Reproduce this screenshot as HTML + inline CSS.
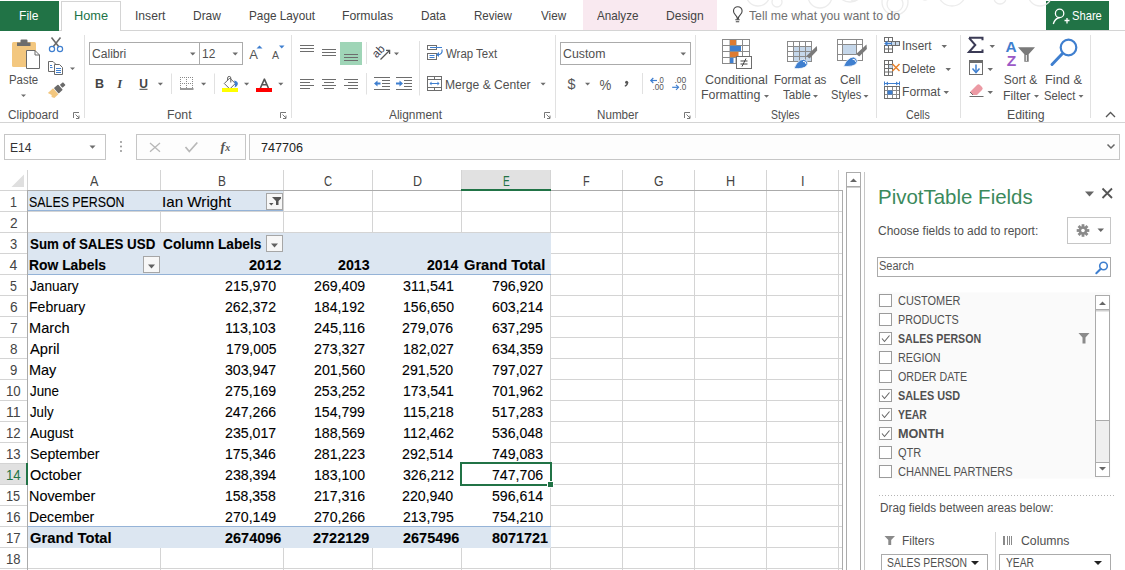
<!DOCTYPE html>
<html><head><meta charset="utf-8"><title>Excel</title>
<style>
html,body{margin:0;padding:0;}
body{width:1125px;height:570px;overflow:hidden;position:relative;background:#fff;font-family:"Liberation Sans",sans-serif;}
.t{position:absolute;white-space:nowrap;transform-origin:0 0;}
.r{position:absolute;box-sizing:border-box;}
.hl{position:absolute;height:1px;}
.vl{position:absolute;width:1px;}
svg{position:absolute;overflow:visible;}

</style></head><body>
<!-- tab row -->
<div class="r" style="left:0;top:30px;width:1125px;height:1px;background:#d4d4d4"></div>
<div class="r" style="left:583px;top:0;width:134px;height:30px;background:#f9e9f0"></div>
<div class="r" style="left:0;top:1px;width:59px;height:30px;background:#217346"></div>
<div class="r" style="left:61px;top:1px;width:60px;height:30px;background:#fff;border:1px solid #d4d4d4;border-bottom:none"></div>
<div class="r" style="left:1046px;top:1px;width:63px;height:29px;background:#217346"></div>
<!-- ribbon bottom -->
<div class="r" style="left:0;top:122px;width:1125px;height:1px;background:#d4d4d4"></div>
<!-- group separators -->
<div class="vl" style="left:84px;top:35px;height:83px;background:#e1e1e1"></div>
<div class="vl" style="left:291px;top:35px;height:83px;background:#e1e1e1"></div>
<div class="vl" style="left:555px;top:35px;height:83px;background:#e1e1e1"></div>
<div class="vl" style="left:695px;top:35px;height:83px;background:#e1e1e1"></div>
<div class="vl" style="left:876px;top:35px;height:83px;background:#e1e1e1"></div>
<div class="vl" style="left:960px;top:35px;height:83px;background:#e1e1e1"></div>
<div class="vl" style="left:1090px;top:35px;height:83px;background:#e1e1e1"></div>
<!-- formula bar -->
<div class="r" style="left:4px;top:134px;width:102px;height:26px;border:1px solid #c6c6c6;background:#fff"></div>
<div class="r" style="left:136px;top:134px;width:110px;height:26px;border:1px solid #c6c6c6;background:#fdfdfd"></div>
<div class="r" style="left:249px;top:134px;width:871px;height:26px;border:1px solid #c6c6c6;background:#fdfdfd"></div>

<div class="vl" style="left:160px;top:170px;height:20px;background:#d4d4d4"></div>
<div class="vl" style="left:283px;top:170px;height:20px;background:#d4d4d4"></div>
<div class="vl" style="left:372px;top:170px;height:20px;background:#d4d4d4"></div>
<div class="vl" style="left:461px;top:170px;height:20px;background:#d4d4d4"></div>
<div class="vl" style="left:550px;top:170px;height:20px;background:#d4d4d4"></div>
<div class="vl" style="left:622px;top:170px;height:20px;background:#d4d4d4"></div>
<div class="vl" style="left:694px;top:170px;height:20px;background:#d4d4d4"></div>
<div class="vl" style="left:766px;top:170px;height:20px;background:#d4d4d4"></div>
<div class="vl" style="left:838px;top:170px;height:20px;background:#d4d4d4"></div>
<div class="r" style="left:462px;top:170px;width:88px;height:20px;background:#e1e1e1"></div>
<div class="hl" style="left:0;top:190px;width:27px;background:#d4d4d4"></div>
<div class="hl" style="left:27px;top:190px;width:816px;background:#ababab"></div>
<div class="vl" style="left:160px;top:191px;height:379px;background:#d4d4d4"></div>
<div class="vl" style="left:283px;top:191px;height:379px;background:#d4d4d4"></div>
<div class="vl" style="left:372px;top:191px;height:379px;background:#d4d4d4"></div>
<div class="vl" style="left:461px;top:191px;height:379px;background:#d4d4d4"></div>
<div class="vl" style="left:550px;top:191px;height:379px;background:#d4d4d4"></div>
<div class="vl" style="left:622px;top:191px;height:379px;background:#d4d4d4"></div>
<div class="vl" style="left:694px;top:191px;height:379px;background:#d4d4d4"></div>
<div class="vl" style="left:766px;top:191px;height:379px;background:#d4d4d4"></div>
<div class="vl" style="left:838px;top:191px;height:379px;background:#d4d4d4"></div>
<div class="hl" style="left:0;top:211px;width:842px;background:#d4d4d4"></div>
<div class="hl" style="left:0;top:232px;width:842px;background:#d4d4d4"></div>
<div class="hl" style="left:0;top:253px;width:842px;background:#d4d4d4"></div>
<div class="hl" style="left:0;top:274px;width:842px;background:#d4d4d4"></div>
<div class="hl" style="left:0;top:295px;width:842px;background:#d4d4d4"></div>
<div class="hl" style="left:0;top:316px;width:842px;background:#d4d4d4"></div>
<div class="hl" style="left:0;top:337px;width:842px;background:#d4d4d4"></div>
<div class="hl" style="left:0;top:358px;width:842px;background:#d4d4d4"></div>
<div class="hl" style="left:0;top:379px;width:842px;background:#d4d4d4"></div>
<div class="hl" style="left:0;top:400px;width:842px;background:#d4d4d4"></div>
<div class="hl" style="left:0;top:421px;width:842px;background:#d4d4d4"></div>
<div class="hl" style="left:0;top:442px;width:842px;background:#d4d4d4"></div>
<div class="hl" style="left:0;top:463px;width:842px;background:#d4d4d4"></div>
<div class="hl" style="left:0;top:484px;width:842px;background:#d4d4d4"></div>
<div class="hl" style="left:0;top:505px;width:842px;background:#d4d4d4"></div>
<div class="hl" style="left:0;top:526px;width:842px;background:#d4d4d4"></div>
<div class="hl" style="left:0;top:547px;width:842px;background:#d4d4d4"></div>
<div class="hl" style="left:0;top:568px;width:842px;background:#d4d4d4"></div>
<div class="vl" style="left:27px;top:170px;height:20px;background:#d4d4d4"></div>
<div class="vl" style="left:27px;top:190px;height:380px;background:#ababab"></div>
<div class="vl" style="left:842px;top:190px;height:380px;background:#ababab"></div>
<svg style="left:0;top:170px" width="27" height="20"><path d="M11.5 17 L24 17 L24 4.5 Z" fill="#dfdfdf"/></svg>
<div class="r" style="left:28px;top:275px;width:522px;height:252px;background:#fff"></div>
<div class="r" style="left:28px;top:191px;width:255px;height:20px;background:#dce6f1;border-bottom:1px solid #95b3d7"></div>
<div class="r" style="left:28px;top:233px;width:523px;height:42px;background:#dce6f1;border-bottom:1px solid #95b3d7"></div>
<div class="r" style="left:28px;top:526px;width:523px;height:22px;background:#dce6f1;border-top:1px solid #95b3d7"></div>
<div class="r" style="left:0;top:464px;width:26px;height:20px;background:#e1e1e1"></div>
<div class="r" style="left:26px;top:463px;width:2px;height:22px;background:#217346"></div>
<div class="r" style="left:460px;top:462px;width:92px;height:24px;border:2px solid #217346"></div>
<div class="r" style="left:461px;top:189px;width:90px;height:2px;background:#217346"></div>
<div class="r" style="left:547px;top:481px;width:7px;height:7px;background:#217346;border:1px solid #fff"></div>
<div class="r" style="left:266px;top:193px;width:17px;height:17px;border:1px solid #a6a6a6;background:#f7f7f7"></div>
<svg style="left:266px;top:193px" width="17" height="17"><path d="M6 4 L15 4 L15 5.5 L12.5 8 L12.5 12 L10 12 L10 8 L7.5 5.5 Z" fill="#555"/><path d="M3 10 L7.5 10 L5.25 12.5 Z" fill="#555"/></svg>
<div class="r" style="left:266px;top:235px;width:17px;height:17px;border:1px solid #a6a6a6;background:#f7f7f7"></div>
<svg style="left:266px;top:235px" width="17" height="17"><path d="M5 8.5 L12 8.5 L8.5 12.5 Z" fill="#616161"/></svg>
<div class="r" style="left:143px;top:256px;width:17px;height:17px;border:1px solid #a6a6a6;background:#f7f7f7"></div>
<svg style="left:143px;top:256px" width="17" height="17"><path d="M5 8.5 L12 8.5 L8.5 12.5 Z" fill="#616161"/></svg>
<svg style="left:0;top:0" width="1125" height="570" viewBox="0 0 1125 570"><!-- clipboard group -->
<rect x="12" y="42" width="24" height="25" rx="1.5" fill="#f3c77f"/>
<path d="M21.5 39.5 h5 a1 1 0 0 1 1 1 v2 h3 v3.5 h-13.5 v-3.5 h3.5 v-2 a1 1 0 0 1 1 -1z" fill="#6d6d6d"/>
<path d="M26.5 50.5 h8.5 l4.5 4.5 v13.5 h-13z" fill="#fff" stroke="#6a6a6a" stroke-width="1"/>
<path d="M35 50.5 v4.5 h4.5" fill="none" stroke="#6a6a6a" stroke-width="1"/>
<path d="M21 94.5 h5 l-2.5 2.5z" fill="#6d6d6d"/>
<!-- scissors -->
<path d="M51.5 37.5 L59 47 M60.5 37.5 L53 47" stroke="#6a6a6a" stroke-width="1.6" fill="none"/>
<circle cx="52" cy="49" r="2.6" fill="none" stroke="#3f7fcf" stroke-width="1.2"/>
<circle cx="60" cy="49" r="2.6" fill="none" stroke="#3f7fcf" stroke-width="1.2"/>
<!-- copy -->
<path d="M48.5 61.5 h4.5 l2.5 2.5 v7.5 h-7z" fill="#fff" stroke="#6a6a6a" stroke-width="1"/>
<path d="M54.5 64.5 h5 l3 3 v7 h-8z" fill="#fff" stroke="#6a6a6a" stroke-width="1"/>
<path d="M50 65.5 h2 M50 67.5 h2.5 M56 68.5 h5 M56 70.5 h5 M56 72.5 h5" stroke="#3f7fcf" stroke-width="1"/>
<path d="M70 67.5 h5 l-2.5 2.5z" fill="#6d6d6d"/>
<!-- brush -->
<g transform="translate(57.6 89.6) rotate(-42)">
<path d="M-9.5 -4 L-2.5 -4 L-2.5 4 L-8 4 L-9.5 1.5 L-8 0 z" fill="#f3c77f"/>
<rect x="-1.8" y="-3.6" width="5.6" height="7.2" rx="0.8" fill="#6a6a6a"/>
<rect x="4.8" y="-2" width="4.2" height="4" rx="0.8" fill="#6a6a6a"/>
</g>
<!-- launchers -->
<g fill="none" stroke="#777" stroke-width="1">
<path d="M73.5 118 v-5.5 h5.5 M75.5 114.5 l3.5 3.5 M79 115.5 v3 h-3"/>
</g>
</svg>
<svg style="left:0;top:0" width="1125" height="570" viewBox="0 0 1125 570"><!-- font group -->
<rect x="89.5" y="42.5" width="153" height="22" fill="#fff" stroke="#ababab" stroke-width="1"/>
<path d="M199.5 42.5 v22" stroke="#ababab" stroke-width="1"/>
<path d="M190 52.5 h5.5 l-2.75 3z M232.5 52.5 h5.5 l-2.75 3z" fill="#6d6d6d"/>
<text x="249.3" y="58.6" font-family="Liberation Sans" font-size="13" fill="#555">A</text>
<path d="M256.5 48.5 l3 -3 l3 3z" fill="#3f7fcf"/>
<text x="272" y="58.6" font-family="Liberation Sans" font-size="10.5" fill="#555">A</text>
<path d="M279 45.5 h5.5 l-2.75 3z" fill="#3f7fcf"/>
<text x="95" y="87.6" font-family="Liberation Sans" font-size="12.5" font-weight="700" fill="#444">B</text>
<text x="117.2" y="87.6" font-family="Liberation Serif" font-size="12.5" font-style="italic" font-weight="700" fill="#444">I</text>
<text x="139.2" y="87.6" font-family="Liberation Sans" font-size="12" font-weight="700" fill="#444">U</text>
<path d="M139.5 89.3 h8" stroke="#444" stroke-width="1"/>
<path d="M157.8 82.8 h5.2 l-2.6 2.8z M201 82.8 h5.2 l-2.6 2.8z M244 82.8 h5.2 l-2.6 2.8z M278.2 82.8 h5.2 l-2.6 2.8z" fill="#6d6d6d"/>
<path d="M171.5 73.5 v20.5 M214.5 73.5 v20.5" stroke="#e1e1e1" stroke-width="1"/>
<!-- borders -->
<g fill="#8a8a8a">
<path d="M180 77 h13.5 v1 h-13.5z" opacity="0"/>
</g>
<path d="M180.5 77 v12 M186.5 77 v12 M192.5 77 v12 M180 77.5 h13 M180 83.5 h13" stroke="#8a8a8a" stroke-width="1" stroke-dasharray="1 1" fill="none"/>
<path d="M180 89 h13.5" stroke="#555" stroke-width="1.2"/>
<!-- fill bucket -->
<path d="M224.3 83.5 L229.8 78 L235.3 83.5 L229.8 89 Z" fill="#fff" stroke="#666" stroke-width="1"/>
<path d="M227.6 80.5 v-2.5 a1.6 1.6 0 0 1 3.2 0 v4.5" fill="none" stroke="#666" stroke-width="1"/>
<path d="M234.2 80.6 q3.8 0.6 3.7 3.4 q-0.3 2.2 -3.2 3.4 q0.6 -2.2 -0.5 -6.8z" fill="#3f7fcf"/>
<rect x="222" y="88" width="16" height="4" fill="#ffff00"/>
<!-- font color -->
<path d="M260.4 88 L264.4 79.2 L268.4 88 M261.9 84.8 h5" fill="none" stroke="#555" stroke-width="1.6" stroke-linejoin="round"/>
<rect x="256" y="88" width="16" height="4" fill="#ff0000"/>
<!-- launcher -->
<path d="M280.5 118 v-5.5 h5.5 M282.5 114.5 l3.5 3.5 M286 115.5 v3 h-3" fill="none" stroke="#777" stroke-width="1"/>
</svg>
<svg style="left:0;top:0" width="1125" height="570" viewBox="0 0 1125 570"><!-- alignment group -->
<g stroke="#6d6d6d" stroke-width="1.1" fill="none">
<path d="M300 45.5 h14 M300 48.5 h14 M300 51.5 h14"/>
<path d="M322 49.5 h14 M322 52.5 h14 M322 55.5 h14"/>
</g>
<rect x="340" y="42" width="22" height="23" fill="#9fd5b7"/>
<g stroke="#6d6d6d" stroke-width="1.1" fill="none">
<path d="M344 54.5 h14 M344 57.5 h14 M344 60.5 h14"/>
<path d="M300 79.5 h14 M300 82.5 h10 M300 85.5 h14 M300 88.5 h10"/>
<path d="M322 79.5 h14 M324 82.5 h10 M322 85.5 h14 M324 88.5 h10"/>
<path d="M344 79.5 h14 M348 82.5 h10 M344 85.5 h14 M348 88.5 h10"/>
<path d="M374 77.5 h16 M382 80.5 h8 M382 83.5 h8 M382 86.5 h8 M374 89.5 h16"/>
<path d="M396 77.5 h16 M404 80.5 h8 M404 83.5 h8 M404 86.5 h8 M396 89.5 h16"/>
</g>
<path d="M374 83.5 l3.5 -3 v2 h3 v2 h-3 v2z" fill="#3f7fcf"/>
<path d="M403 83.5 l-3.5 -3 v2 h-3.5 v2 h3.5 v2z" fill="#3f7fcf"/>
<path d="M366.5 42 v22 M366.5 73 v21.5 M419.5 41 v54.5" stroke="#e1e1e1" stroke-width="1"/>
<!-- orientation -->
<text x="0" y="0" font-family="Liberation Sans" font-size="11.5" fill="#3b3b4b" transform="translate(376.6 58.4) rotate(-45)">ab</text>
<path d="M380.5 59.5 l8.5 -8.5" stroke="#555" stroke-width="1.2"/>
<path d="M386 50.3 h3.6 v3.6" stroke="#555" stroke-width="1.3" fill="none"/>
<path d="M394 52.5 h5 l-2.5 2.7z" fill="#6d6d6d"/>
<!-- wrap text -->
<rect x="427.5" y="45.5" width="9" height="4" fill="#fff" stroke="#6d6d6d" stroke-width="1"/>
<rect x="427.5" y="53.5" width="9" height="6" fill="#fff" stroke="#6d6d6d" stroke-width="1"/>
<path d="M430 47.5 h12 M429.5 55.5 h5 M429.5 57.5 h5" stroke="#3f7fcf" stroke-width="1"/>
<path d="M442 49.5 q1 5 -5 5.5" stroke="#3f7fcf" stroke-width="1.2" fill="none"/>
<path d="M436 54.5 l3 -2.5 v5z" fill="#3f7fcf"/>
<!-- merge -->
<rect x="427.5" y="76.5" width="14" height="14" fill="#fff" stroke="#6d6d6d" stroke-width="1"/>
<path d="M427.5 79.5 h14 M427.5 87.5 h14 M434.5 76.5 v3 M434.5 87.5 v3" stroke="#6d6d6d" stroke-width="1"/>
<path d="M430 83.5 h9" stroke="#3f7fcf" stroke-width="1"/>
<path d="M429.5 83.5 l2 -2 v4z M439.5 83.5 l-2 -2 v4z" fill="#3f7fcf"/>
<path d="M540.5 82.8 h5.2 l-2.6 2.8z" fill="#6d6d6d"/>
<path d="M544.5 118 v-5.5 h5.5 M546.5 114.5 l3.5 3.5 M550 115.5 v3 h-3" fill="none" stroke="#777" stroke-width="1"/>
</svg>
<svg style="left:0;top:0" width="1125" height="570" viewBox="0 0 1125 570"><!-- number group -->
<rect x="560.5" y="42.5" width="130" height="22" fill="#fff" stroke="#ababab" stroke-width="1"/>
<path d="M680.5 52.5 h5.5 l-2.75 3z" fill="#6d6d6d"/>
<text x="567.6" y="88.6" font-family="Liberation Sans" font-size="15" fill="#555" textLength="8" lengthAdjust="spacingAndGlyphs">$</text>
<path d="M585 82.8 h5.2 l-2.6 2.8z" fill="#6d6d6d"/>
<text x="599.4" y="89.8" font-family="Liberation Sans" font-size="14" fill="#555" textLength="11.8" lengthAdjust="spacingAndGlyphs">%</text>
<circle cx="626.6" cy="82.2" r="1.5" fill="#555"/>
<path d="M627.6 82 q0.4 2.6 -2.8 4.3" stroke="#555" stroke-width="1.2" fill="none"/>
<path d="M642.5 73 v21" stroke="#e1e1e1" stroke-width="1"/>
<text x="657.4" y="82.8" font-family="Liberation Sans" font-size="8.5" fill="#555" textLength="6.5" lengthAdjust="spacingAndGlyphs">.0</text>
<text x="652.6" y="89.8" font-family="Liberation Sans" font-size="8.5" fill="#555" textLength="11.3" lengthAdjust="spacingAndGlyphs">.00</text>
<path d="M650.8 80.5 h6.2" stroke="#3f7fcf" stroke-width="1.2"/>
<path d="M653.3 78 l-2.5 2.5 l2.5 2.5" stroke="#3f7fcf" stroke-width="1.2" fill="none"/>
<text x="674.4" y="82.8" font-family="Liberation Sans" font-size="8.5" fill="#555" textLength="11.8" lengthAdjust="spacingAndGlyphs">.00</text>
<text x="679.4" y="89.8" font-family="Liberation Sans" font-size="8.5" fill="#555" textLength="6.8" lengthAdjust="spacingAndGlyphs">.0</text>
<path d="M672.2 87.3 h6.2" stroke="#3f7fcf" stroke-width="1.2"/>
<path d="M676 84.8 l2.5 2.5 l-2.5 2.5" stroke="#3f7fcf" stroke-width="1.2" fill="none"/>
<path d="M684.5 118 v-5.5 h5.5 M686.5 114.5 l3.5 3.5 M690 115.5 v3 h-3" fill="none" stroke="#777" stroke-width="1"/>
</svg>
<svg style="left:0;top:0" width="1125" height="570" viewBox="0 0 1125 570"><!-- styles group -->
<!-- conditional formatting -->
<g stroke="#8a8a8a" stroke-width="1" fill="none">
<rect x="722.5" y="39.5" width="27" height="24"/>
<path d="M730 39.5 v24 M736 39.5 v24 M742.5 39.5 v24 M722.5 45.5 h27 M722.5 51.5 h27 M722.5 57.5 h27"/>
</g>
<rect x="730" y="40" width="6" height="5" fill="#dd7b32"/>
<rect x="730" y="46" width="11" height="5" fill="#3f7fcf"/>
<rect x="730" y="52" width="8.5" height="5" fill="#dd7b32"/>
<rect x="730" y="58" width="3.5" height="5" fill="#3f7fcf"/>
<rect x="736.5" y="56.5" width="15" height="12" fill="#fff" stroke="#6d6d6d" stroke-width="1"/>
<path d="M740.5 61 h7 M740.5 64 h7 M746 58.5 l-4 8" stroke="#444" stroke-width="1" fill="none"/>
<!-- format as table -->
<rect x="793.5" y="46.5" width="18" height="15" fill="#c5d7ea"/>
<g stroke="#8a8a8a" stroke-width="1" fill="none">
<rect x="787.5" y="41.5" width="24" height="20"/>
<path d="M793.5 41.5 v20 M799.5 41.5 v20 M805.5 41.5 v20 M787.5 46.5 h24 M787.5 51.5 h24 M787.5 56.5 h24"/>
</g>
<path d="M816.8 46 L817.2 50.5 L809.5 58.5 L806.5 56z" fill="#7a7a7a"/>
<path d="M794 68.6 q2 -6 6.5 -8.5 q3.5 -2 6 0.5 q2.5 2.5 0 5.5 q-3 3 -12.5 2.5z" fill="#3f7fcf" stroke="#fff" stroke-width="0.8"/><path d="M803 61.5 q3 -0.5 3 2.5" stroke="#fff" stroke-width="1" fill="none"/>
<!-- cell styles -->
<rect x="842.5" y="44.5" width="14" height="10" fill="#c5d7ea"/>
<g stroke="#8a8a8a" stroke-width="1" fill="none">
<rect x="837.5" y="39.5" width="25" height="21"/>
<path d="M842.5 39.5 v21 M856.5 39.5 v15 M837.5 44.5 h25 M837.5 54.5 h19"/>
</g>
<path d="M866.5 44.5 L866.9 49 L859.2 56.5 L856.2 54z" fill="#7a7a7a"/>
<path d="M843.6 66.4 q2 -6 6.5 -8.5 q3.5 -2 6 0.5 q2.5 2.5 0 5.5 q-3 3 -12.5 2.5z" fill="#3f7fcf" stroke="#fff" stroke-width="0.8"/><path d="M852.6 59.3 q3 -0.5 3 2.5" stroke="#fff" stroke-width="1" fill="none"/>
<path d="M764 95 h5 l-2.5 2.7z M813 95 h5 l-2.5 2.7z M863.5 95 h5 l-2.5 2.7z" fill="#6d6d6d"/>
</svg>
<svg style="left:0;top:0" width="1125" height="570" viewBox="0 0 1125 570"><!-- cells group -->
<g stroke="#6d6d6d" stroke-width="1" fill="#fff">
<rect x="884.5" y="37.5" width="8" height="4"/>
<path d="M888.5 37.5 v4"/>
<rect x="884.5" y="45.5" width="8" height="7"/>
<path d="M888.5 45.5 v7 M884.5 49 h8"/>
<rect x="891.5" y="41.5" width="8" height="4" fill="#c5d7ea"/>
<path d="M895.5 41.5 v4"/>
</g>
<path d="M886.5 43.5 h5.5" stroke="#3f7fcf" stroke-width="1.6"/>
<path d="M884.2 43.5 l3.3 -3 v6z" fill="#3f7fcf"/>
<g stroke="#6d6d6d" stroke-width="1" fill="#fff">
<rect x="884.5" y="60.5" width="8" height="15"/>
<path d="M888.5 60.5 v15 M884.5 64.5 h8 M884.5 68.5 h8 M884.5 72 h8"/>
</g>
<rect x="889" y="65" width="3.5" height="3" fill="#c5d7ea"/>
<path d="M892.5 64 l7 7 M899.5 64 l-7 7" stroke="#e8842f" stroke-width="1.5"/>
<path d="M884.5 83.5 h15" stroke="#3f7fcf" stroke-width="1"/>
<path d="M884.5 81.5 v4 M899.5 81.5 v4" stroke="#3f7fcf" stroke-width="1"/>
<path d="M885.5 83.5 l2.5 -2 v4z M898.5 83.5 l-2.5 -2 v4z" fill="#3f7fcf"/>
<g stroke="#8a8a8a" stroke-width="1" fill="#fff">
<rect x="884.5" y="86.5" width="15" height="12"/>
<path d="M887.5 86.5 v12 M892.5 86.5 v12 M896.5 86.5 v12 M884.5 90.5 h15 M884.5 94.5 h15"/>
</g>
<rect x="887.5" y="90.5" width="5" height="4" fill="#3f7fcf"/>
<path d="M884.5 86.5 h15 v12 h-15z" fill="none" stroke="#6d6d6d" stroke-width="1"/>
<path d="M941.5 45 h5.5 l-2.75 3z M945.5 68 h5.5 l-2.75 3z M943.5 91 h5.5 l-2.75 3z" fill="#6d6d6d"/>
<!-- editing group -->
<path d="M969 37.8 h13.5 v2.5 M969 37.8 l6.3 7.2 l-6.3 7 h13.5 v-2.5" stroke="#3b3b55" stroke-width="2" fill="none" stroke-linejoin="miter"/>
<path d="M989.5 45 h5.5 l-2.75 3z" fill="#6d6d6d"/>
<rect x="969.5" y="60.5" width="13" height="14" fill="#fff" stroke="#6d6d6d" stroke-width="1"/>
<rect x="969" y="60" width="14" height="3" fill="#6d6d6d"/>
<path d="M976 64.5 v7" stroke="#3f7fcf" stroke-width="1.5"/>
<path d="M972.5 68.5 l3.5 4 l3.5 -4" stroke="#3f7fcf" stroke-width="1.5" fill="none"/>
<path d="M987.5 68 h5.5 l-2.75 3z" fill="#6d6d6d"/>
<path d="M970 92 l7 -7 q1.5 -1.5 3 0 l2 2 q1.5 1.5 0 3 l-5 5 h-4.5z" fill="#ec9aa4"/>
<path d="M970 92 l3 3 M969.5 96.5 h14" stroke="#6d6d6d" stroke-width="1"/>
<path d="M987.5 91 h5.5 l-2.75 3z" fill="#6d6d6d"/>
<text x="1005.4" y="51.8" font-family="Liberation Sans" font-size="15.5" font-weight="700" fill="#3f7fcf">A</text>
<text x="1006.8" y="65.6" font-family="Liberation Sans" font-size="15.5" font-weight="700" fill="#9b59c6">Z</text>
<path d="M1018 47.2 h17 l-6.3 7 v7.6 h-4.4 v-7.6z" fill="#7a7a7a"/><path d="M1020.5 48.8 h12 l-5 5.2 v6.8 h-2 v-6.8z" fill="#fff" opacity="0"/><path d="M1026.3 55 v6" stroke="#fff" stroke-width="1"/>
<path d="M1020 48.5 h13 l-5 5.5 v5.5 h-2 v-5.5z" fill="#fff" opacity="0"/>
<circle cx="1068.5" cy="47.5" r="7.8" fill="none" stroke="#3f7fcf" stroke-width="2.2"/>
<path d="M1062.5 53.5 l-10.5 11" stroke="#3f7fcf" stroke-width="3" stroke-linecap="round"/>
<path d="M1034 95 h5 l-2.5 2.7z M1078.5 95 h5 l-2.5 2.7z" fill="#6d6d6d"/>
<path d="M1106 117 l4.5 -4.5 l4.5 4.5" stroke="#555" stroke-width="1.3" fill="none"/>
</svg>
<svg style="left:0;top:0" width="1125" height="570" viewBox="0 0 1125 570"><!-- tab row extras -->
<g fill="none" stroke="#ececec" stroke-width="1.3">
<circle cx="758" cy="-6" r="12"/>
<circle cx="777" cy="2" r="5"/>
<circle cx="820" cy="-4" r="12"/>
<circle cx="854" cy="-3" r="4"/>
<circle cx="895" cy="2" r="13"/>
<circle cx="895" cy="4" r="8"/>
<circle cx="850" cy="-12" r="14"/>
<circle cx="925" cy="-5" r="5"/>
<circle cx="952" cy="-8" r="14"/>
<circle cx="1000" cy="-2" r="6"/>
<circle cx="1040" cy="-6" r="12"/>
</g>
<!-- light bulb -->
<path d="M737.5 19.5 q0 -2.5 -2.3 -4.8 q-1.7 -1.8 -1.7 -3.7 a4.3 4.3 0 0 1 8.6 0 q0 1.9 -1.7 3.7 q-2.3 2.3 -2.3 4.8" fill="none" stroke="#444" stroke-width="1.1"/>
<path d="M735.3 19.8 h4.4 M735.8 21.8 h3.4" stroke="#444" stroke-width="1.1"/>
<!-- share person -->
<circle cx="1059.6" cy="13.4" r="4.2" fill="none" stroke="#fff" stroke-width="1.3"/>
<path d="M1053.3 24 q1.5 -5.5 6.3 -6.5" fill="none" stroke="#fff" stroke-width="1.3"/>
<path d="M1064.5 20.5 h5 M1067 18 v5.5" stroke="#fff" stroke-width="1.3"/>
<!-- formula bar -->
<path d="M89.5 145.5 h6 l-3 3.2z" fill="#6d6d6d"/>
<circle cx="121" cy="142" r="0.9" fill="#888"/>
<circle cx="121" cy="146.5" r="0.9" fill="#888"/>
<circle cx="121" cy="151" r="0.9" fill="#888"/>
<path d="M150 143 l10 8.8 M160 143 l-10 8.8" stroke="#b8b8b8" stroke-width="1.3"/>
<path d="M185.5 147 l3.8 4.5 l8 -9" stroke="#b8b8b8" stroke-width="1.7" fill="none"/>
<text x="220.5" y="150.8" font-family="Liberation Serif" font-size="13.5" font-style="italic" font-weight="700" fill="#555">f</text>
<text x="225.3" y="151" font-family="Liberation Serif" font-size="10" font-style="italic" font-weight="700" fill="#555">x</text>
<path d="M1107.5 144.5 l3.5 3.5 l3.5 -3.5" stroke="#666" stroke-width="1.5" fill="none"/>
<!-- sheet scrollbar -->
<rect x="846.5" y="172.5" width="14" height="400" fill="#fff" stroke="#ababab" stroke-width="1"/>
<path d="M846.5 186.5 h14" stroke="#ababab" stroke-width="1"/>
<rect x="847" y="187" width="13" height="1" fill="#cfcfcf"/>
<path d="M850 182 l3.5 -3.5 l3.5 3.5z" fill="#666"/>
<path d="M864.5 172 v398" stroke="#c6c6c6" stroke-width="1"/>
</svg>
<svg style="left:0;top:0" width="1125" height="570" viewBox="0 0 1125 570"><!-- pivot panel -->
<path d="M1085 191.5 h9 l-4.5 5z" fill="#666"/>
<path d="M1102.5 188.5 l9.5 9.5 M1112 188.5 l-9.5 9.5" stroke="#555" stroke-width="1.8"/>
<rect x="1067.5" y="217.5" width="43" height="26" fill="#fff" stroke="#c6c6c6" stroke-width="1"/>
<g transform="translate(1083 230.5)">
<circle r="4.2" fill="#8a8a8a"/>
<g fill="#8a8a8a">
<rect x="-1.4" y="-6.3" width="2.8" height="12.6"/>
<rect x="-1.4" y="-6.3" width="2.8" height="12.6" transform="rotate(45)"/>
<rect x="-1.4" y="-6.3" width="2.8" height="12.6" transform="rotate(90)"/>
<rect x="-1.4" y="-6.3" width="2.8" height="12.6" transform="rotate(135)"/>
</g>
<circle r="1.8" fill="#fff"/>
</g>
<path d="M1097.5 228.5 h6.5 l-3.25 3.5z" fill="#666"/>
<rect x="877.5" y="257.5" width="233" height="19" fill="#fff" stroke="#ababab" stroke-width="1"/>
<circle cx="1103.5" cy="266" r="3.8" fill="none" stroke="#3f7fcf" stroke-width="1.6"/>
<path d="M1100.8 268.8 l-4.5 4.5" stroke="#3f7fcf" stroke-width="2" stroke-linecap="round"/>
<!-- list bg -->
<rect x="877.5" y="292.5" width="233" height="186" fill="#fafafa"/>
<g fill="#fff" stroke="#9b9b9b" stroke-width="1">
<rect x="879.5" y="294.5" width="12" height="12"/>
<rect x="879.5" y="313.5" width="12" height="12"/>
<rect x="879.5" y="332.5" width="12" height="12"/>
<rect x="879.5" y="351.5" width="12" height="12"/>
<rect x="879.5" y="370.5" width="12" height="12"/>
<rect x="879.5" y="389.5" width="12" height="12"/>
<rect x="879.5" y="408.5" width="12" height="12"/>
<rect x="879.5" y="427.5" width="12" height="12"/>
<rect x="879.5" y="446.5" width="12" height="12"/>
<rect x="879.5" y="465.5" width="12" height="12"/>
</g>
<g fill="none" stroke="#666" stroke-width="1.1">
<path d="M882 338.5 l2.5 3 l5 -6"/>
<path d="M882 395.5 l2.5 3 l5 -6"/>
<path d="M882 414.5 l2.5 3 l5 -6"/>
<path d="M882 433.5 l2.5 3 l5 -6"/>
</g>
<path d="M1078.5 333 h11 l-4 4.5 v6 h-3 v-6z" fill="#8a8a8a"/>
<!-- list scrollbar -->
<rect x="1095.5" y="295.5" width="14" height="181" fill="#fff" stroke="#ababab" stroke-width="1"/>
<rect x="1096" y="421" width="13" height="41" fill="#efefef"/>
<path d="M1095.5 309.5 h14 M1095.5 420.5 h14 M1095.5 462.5 h14" stroke="#ababab" stroke-width="1"/>
<rect x="1096" y="310" width="13" height="1.5" fill="#cfcfcf"/>
<path d="M1099 305 l3.5 -3.5 l3.5 3.5z M1099 467 l3.5 3.5 l3.5 -3.5z" fill="#666"/>
<path d="M879 495.5 h236" stroke="#b4b4b4" stroke-width="1" stroke-dasharray="1 2"/>
<!-- areas -->
<path d="M884.5 536 h10.5 l-3.8 4 v5 h-2.9 v-5z" fill="#8a8a8a"/>
<path d="M995.5 532 v38" stroke="#d4d4d4" stroke-width="1"/>
<path d="M1004 536 v9" stroke="#8a8a8a" stroke-width="2"/><path d="M1007.5 536 v9 M1009.5 536 v9 M1011.5 536 v9" stroke="#8a8a8a" stroke-width="1"/>
<rect x="881.5" y="554.5" width="106" height="20" fill="#fff" stroke="#ababab" stroke-width="1"/>
<path d="M971 561 h8 l-4 4z" fill="#222"/>
<rect x="999.5" y="554.5" width="111" height="20" fill="#fff" stroke="#ababab" stroke-width="1"/>
<path d="M1094 561 h8 l-4 4z" fill="#222"/>
</svg>
<span class="t" style="left:19.07px;top:9.00px;font-size:13px;line-height:13px;color:#fff;transform:scaleX(0.9290);">File</span>
<span class="t" style="left:73.52px;top:8.80px;font-size:13px;line-height:13px;color:#217346;transform:scaleX(0.9811);">Home</span>
<span class="t" style="left:134.84px;top:9.00px;font-size:13px;line-height:13px;color:#444;transform:scaleX(0.9317);">Insert</span>
<span class="t" style="left:193.08px;top:9.00px;font-size:13px;line-height:13px;color:#444;transform:scaleX(0.9191);">Draw</span>
<span class="t" style="left:249.10px;top:9.00px;font-size:13px;line-height:13px;color:#444;transform:scaleX(0.9043);">Page Layout</span>
<span class="t" style="left:342.06px;top:9.00px;font-size:13px;line-height:13px;color:#444;transform:scaleX(0.9422);">Formulas</span>
<span class="t" style="left:421.09px;top:9.00px;font-size:13px;line-height:13px;color:#444;transform:scaleX(0.9057);">Data</span>
<span class="t" style="left:474.11px;top:9.00px;font-size:13px;line-height:13px;color:#444;transform:scaleX(0.8889);">Review</span>
<span class="t" style="left:540.89px;top:9.00px;font-size:13px;line-height:13px;color:#444;transform:scaleX(0.8969);">View</span>
<span class="t" style="left:597.00px;top:9.00px;font-size:13px;line-height:13px;color:#444;transform:scaleX(0.8962);">Analyze</span>
<span class="t" style="left:666.07px;top:9.00px;font-size:13px;line-height:13px;color:#444;transform:scaleX(0.9320);">Design</span>
<span class="t" style="left:749.06px;top:8.90px;font-size:13px;line-height:13px;color:#707070;transform:scaleX(0.9416);">Tell me what you want to do</span>
<span class="t" style="left:1071.66px;top:8.60px;font-size:13px;line-height:13px;color:#fff;transform:scaleX(0.8597);">Share</span>
<span class="t" style="left:90.26px;top:174.00px;font-size:14px;line-height:14px;color:#444;transform:scaleX(0.9041);">A</span>
<span class="t" style="left:218.36px;top:174.00px;font-size:14px;line-height:14px;color:#444;transform:scaleX(0.8500);">B</span>
<span class="t" style="left:324.40px;top:174.00px;font-size:14px;line-height:14px;color:#444;transform:scaleX(0.8000);">C</span>
<span class="t" style="left:412.74px;top:174.00px;font-size:14px;line-height:14px;color:#444;transform:scaleX(0.8955);">D</span>
<span class="t" style="left:502.94px;top:174.00px;font-size:14px;line-height:14px;color:#217346;transform:scaleX(0.7213);">E</span>
<span class="t" style="left:583.43px;top:174.00px;font-size:14px;line-height:14px;color:#444;transform:scaleX(0.7818);">F</span>
<span class="t" style="left:654.34px;top:174.00px;font-size:14px;line-height:14px;color:#444;transform:scaleX(0.8767);">G</span>
<span class="t" style="left:726.42px;top:174.00px;font-size:14px;line-height:14px;color:#444;transform:scaleX(0.9048);">H</span>
<span class="t" style="left:801.24px;top:174.00px;font-size:14px;line-height:14px;color:#444;transform:scaleX(0.9091);">I</span>
<span class="t" style="left:9.85px;top:194.70px;font-size:14px;line-height:14px;color:#444;transform:scaleX(0.8980);">1</span>
<span class="t" style="left:9.64px;top:215.70px;font-size:14px;line-height:14px;color:#444;transform:scaleX(0.9804);">2</span>
<span class="t" style="left:9.98px;top:236.70px;font-size:14px;line-height:14px;color:#444;transform:scaleX(0.9245);">3</span>
<span class="t" style="left:9.62px;top:257.70px;font-size:14px;line-height:14px;color:#444;">4</span>
<span class="t" style="left:10.01px;top:278.70px;font-size:14px;line-height:14px;color:#444;transform:scaleX(0.8868);">5</span>
<span class="t" style="left:9.64px;top:299.70px;font-size:14px;line-height:14px;color:#444;transform:scaleX(0.9804);">6</span>
<span class="t" style="left:9.64px;top:320.70px;font-size:14px;line-height:14px;color:#444;transform:scaleX(0.9804);">7</span>
<span class="t" style="left:9.77px;top:341.70px;font-size:14px;line-height:14px;color:#444;transform:scaleX(0.9615);">8</span>
<span class="t" style="left:9.85px;top:362.70px;font-size:14px;line-height:14px;color:#444;transform:scaleX(0.9423);">9</span>
<span class="t" style="left:5.93px;top:383.70px;font-size:14px;line-height:14px;color:#444;transform:scaleX(0.9464);">10</span>
<span class="t" style="left:5.99px;top:404.70px;font-size:14px;line-height:14px;color:#444;transform:scaleX(1.0097);">11</span>
<span class="t" style="left:6.06px;top:425.70px;font-size:14px;line-height:14px;color:#444;transform:scaleX(0.9369);">12</span>
<span class="t" style="left:6.00px;top:446.70px;font-size:14px;line-height:14px;color:#444;transform:scaleX(0.9375);">13</span>
<span class="t" style="left:5.87px;top:467.70px;font-size:14px;line-height:14px;color:#217346;transform:scaleX(0.9469);">14</span>
<span class="t" style="left:6.21px;top:488.70px;font-size:14px;line-height:14px;color:#444;transform:scaleX(0.9107);">15</span>
<span class="t" style="left:6.00px;top:509.70px;font-size:14px;line-height:14px;color:#444;transform:scaleX(0.9375);">16</span>
<span class="t" style="left:5.99px;top:530.70px;font-size:14px;line-height:14px;color:#444;transform:scaleX(0.9459);">17</span>
<span class="t" style="left:6.07px;top:551.70px;font-size:14px;line-height:14px;color:#444;transform:scaleX(0.9286);">18</span>
<span class="t" style="left:29.48px;top:193.70px;font-size:15px;line-height:15px;color:#000;transform:scaleX(0.8246);-webkit-text-stroke:0.1px #000;">SALES PERSON</span>
<span class="t" style="left:161.91px;top:193.70px;font-size:15px;line-height:15px;color:#000;transform:scaleX(1.0116);-webkit-text-stroke:0.1px #000;">Ian Wright</span>
<span class="t" style="left:29.66px;top:235.70px;font-size:15px;line-height:15px;color:#000;font-weight:700;transform:scaleX(0.8894);-webkit-text-stroke:0.1px #000;">Sum of SALES USD</span>
<span class="t" style="left:162.73px;top:235.70px;font-size:15px;line-height:15px;color:#000;font-weight:700;transform:scaleX(0.9158);-webkit-text-stroke:0.1px #000;">Column Labels</span>
<span class="t" style="left:29.18px;top:256.70px;font-size:15px;line-height:15px;color:#000;font-weight:700;transform:scaleX(0.9248);-webkit-text-stroke:0.1px #000;">Row Labels</span>
<span class="t" style="left:248.64px;top:256.70px;font-size:15px;line-height:15px;color:#000;font-weight:700;transform:scaleX(0.9729);-webkit-text-stroke:0.1px #000;">2012</span>
<span class="t" style="left:338.03px;top:256.70px;font-size:15px;line-height:15px;color:#000;font-weight:700;transform:scaleX(0.9452);-webkit-text-stroke:0.1px #000;">2013</span>
<span class="t" style="left:426.83px;top:256.70px;font-size:15px;line-height:15px;color:#000;font-weight:700;transform:scaleX(0.9374);-webkit-text-stroke:0.1px #000;">2014</span>
<span class="t" style="left:463.59px;top:256.70px;font-size:15px;line-height:15px;color:#000;font-weight:700;transform:scaleX(0.9782);-webkit-text-stroke:0.1px #000;">Grand Total</span>
<span class="t" style="left:30.37px;top:277.70px;font-size:15px;line-height:15px;color:#000;transform:scaleX(0.9084);-webkit-text-stroke:0.1px #000;">January</span>
<span class="t" style="left:224.84px;top:277.70px;font-size:15px;line-height:15px;color:#000;transform:scaleX(0.9448);-webkit-text-stroke:0.1px #000;">215,970</span>
<span class="t" style="left:313.96px;top:277.70px;font-size:15px;line-height:15px;color:#000;transform:scaleX(0.9447);-webkit-text-stroke:0.1px #000;">269,409</span>
<span class="t" style="left:402.81px;top:277.70px;font-size:15px;line-height:15px;color:#000;transform:scaleX(0.9583);-webkit-text-stroke:0.1px #000;">311,541</span>
<span class="t" style="left:491.84px;top:277.70px;font-size:15px;line-height:15px;color:#000;transform:scaleX(0.9448);-webkit-text-stroke:0.1px #000;">796,920</span>
<span class="t" style="left:29.33px;top:298.70px;font-size:15px;line-height:15px;color:#000;transform:scaleX(0.9370);-webkit-text-stroke:0.1px #000;">February</span>
<span class="t" style="left:225.08px;top:298.70px;font-size:15px;line-height:15px;color:#000;transform:scaleX(0.9424);-webkit-text-stroke:0.1px #000;">262,372</span>
<span class="t" style="left:314.34px;top:298.70px;font-size:15px;line-height:15px;color:#000;transform:scaleX(0.9376);-webkit-text-stroke:0.1px #000;">184,192</span>
<span class="t" style="left:402.59px;top:298.70px;font-size:15px;line-height:15px;color:#000;transform:scaleX(0.9400);-webkit-text-stroke:0.1px #000;">156,650</span>
<span class="t" style="left:491.72px;top:298.70px;font-size:15px;line-height:15px;color:#000;transform:scaleX(0.9448);-webkit-text-stroke:0.1px #000;">603,214</span>
<span class="t" style="left:29.28px;top:319.70px;font-size:15px;line-height:15px;color:#000;transform:scaleX(0.9731);-webkit-text-stroke:0.1px #000;">March</span>
<span class="t" style="left:225.32px;top:319.70px;font-size:15px;line-height:15px;color:#000;transform:scaleX(0.9558);-webkit-text-stroke:0.1px #000;">113,103</span>
<span class="t" style="left:313.94px;top:319.70px;font-size:15px;line-height:15px;color:#000;transform:scaleX(0.9630);-webkit-text-stroke:0.1px #000;">245,116</span>
<span class="t" style="left:402.46px;top:319.70px;font-size:15px;line-height:15px;color:#000;transform:scaleX(0.9425);-webkit-text-stroke:0.1px #000;">279,076</span>
<span class="t" style="left:492.33px;top:319.70px;font-size:15px;line-height:15px;color:#000;transform:scaleX(0.9356);-webkit-text-stroke:0.1px #000;">637,295</span>
<span class="t" style="left:30.38px;top:340.70px;font-size:15px;line-height:15px;color:#000;transform:scaleX(0.9826);-webkit-text-stroke:0.1px #000;">April</span>
<span class="t" style="left:225.59px;top:340.70px;font-size:15px;line-height:15px;color:#000;transform:scaleX(0.9307);-webkit-text-stroke:0.1px #000;">179,005</span>
<span class="t" style="left:313.96px;top:340.70px;font-size:15px;line-height:15px;color:#000;transform:scaleX(0.9447);-webkit-text-stroke:0.1px #000;">273,327</span>
<span class="t" style="left:402.72px;top:340.70px;font-size:15px;line-height:15px;color:#000;transform:scaleX(0.9399);-webkit-text-stroke:0.1px #000;">182,027</span>
<span class="t" style="left:491.96px;top:340.70px;font-size:15px;line-height:15px;color:#000;transform:scaleX(0.9447);-webkit-text-stroke:0.1px #000;">634,359</span>
<span class="t" style="left:29.29px;top:361.70px;font-size:15px;line-height:15px;color:#000;transform:scaleX(0.9655);-webkit-text-stroke:0.1px #000;">May</span>
<span class="t" style="left:225.08px;top:361.70px;font-size:15px;line-height:15px;color:#000;transform:scaleX(0.9425);-webkit-text-stroke:0.1px #000;">303,947</span>
<span class="t" style="left:313.84px;top:361.70px;font-size:15px;line-height:15px;color:#000;transform:scaleX(0.9448);-webkit-text-stroke:0.1px #000;">201,560</span>
<span class="t" style="left:402.34px;top:361.70px;font-size:15px;line-height:15px;color:#000;transform:scaleX(0.9448);-webkit-text-stroke:0.1px #000;">291,520</span>
<span class="t" style="left:491.96px;top:361.70px;font-size:15px;line-height:15px;color:#000;transform:scaleX(0.9447);-webkit-text-stroke:0.1px #000;">797,027</span>
<span class="t" style="left:30.38px;top:382.70px;font-size:15px;line-height:15px;color:#000;transform:scaleX(0.8895);-webkit-text-stroke:0.1px #000;">June</span>
<span class="t" style="left:224.96px;top:382.70px;font-size:15px;line-height:15px;color:#000;transform:scaleX(0.9447);-webkit-text-stroke:0.1px #000;">275,169</span>
<span class="t" style="left:314.08px;top:382.70px;font-size:15px;line-height:15px;color:#000;transform:scaleX(0.9424);-webkit-text-stroke:0.1px #000;">253,252</span>
<span class="t" style="left:402.96px;top:382.70px;font-size:15px;line-height:15px;color:#000;transform:scaleX(0.9353);-webkit-text-stroke:0.1px #000;">173,541</span>
<span class="t" style="left:492.08px;top:382.70px;font-size:15px;line-height:15px;color:#000;transform:scaleX(0.9424);-webkit-text-stroke:0.1px #000;">701,962</span>
<span class="t" style="left:30.38px;top:403.70px;font-size:15px;line-height:15px;color:#000;transform:scaleX(0.8827);-webkit-text-stroke:0.1px #000;">July</span>
<span class="t" style="left:224.96px;top:403.70px;font-size:15px;line-height:15px;color:#000;transform:scaleX(0.9425);-webkit-text-stroke:0.1px #000;">247,266</span>
<span class="t" style="left:314.22px;top:403.70px;font-size:15px;line-height:15px;color:#000;transform:scaleX(0.9399);-webkit-text-stroke:0.1px #000;">154,799</span>
<span class="t" style="left:402.82px;top:403.70px;font-size:15px;line-height:15px;color:#000;transform:scaleX(0.9558);-webkit-text-stroke:0.1px #000;">115,218</span>
<span class="t" style="left:492.20px;top:403.70px;font-size:15px;line-height:15px;color:#000;transform:scaleX(0.9402);-webkit-text-stroke:0.1px #000;">517,283</span>
<span class="t" style="left:30.38px;top:424.70px;font-size:15px;line-height:15px;color:#000;transform:scaleX(0.9309);-webkit-text-stroke:0.1px #000;">August</span>
<span class="t" style="left:224.96px;top:424.70px;font-size:15px;line-height:15px;color:#000;transform:scaleX(0.9447);-webkit-text-stroke:0.1px #000;">235,017</span>
<span class="t" style="left:314.22px;top:424.70px;font-size:15px;line-height:15px;color:#000;transform:scaleX(0.9399);-webkit-text-stroke:0.1px #000;">188,569</span>
<span class="t" style="left:402.82px;top:424.70px;font-size:15px;line-height:15px;color:#000;transform:scaleX(0.9582);-webkit-text-stroke:0.1px #000;">112,462</span>
<span class="t" style="left:492.20px;top:424.70px;font-size:15px;line-height:15px;color:#000;transform:scaleX(0.9380);-webkit-text-stroke:0.1px #000;">536,048</span>
<span class="t" style="left:29.79px;top:445.70px;font-size:15px;line-height:15px;color:#000;transform:scaleX(0.9482);-webkit-text-stroke:0.1px #000;">September</span>
<span class="t" style="left:225.22px;top:445.70px;font-size:15px;line-height:15px;color:#000;transform:scaleX(0.9377);-webkit-text-stroke:0.1px #000;">175,346</span>
<span class="t" style="left:314.08px;top:445.70px;font-size:15px;line-height:15px;color:#000;transform:scaleX(0.9424);-webkit-text-stroke:0.1px #000;">281,223</span>
<span class="t" style="left:402.22px;top:445.70px;font-size:15px;line-height:15px;color:#000;transform:scaleX(0.9448);-webkit-text-stroke:0.1px #000;">292,514</span>
<span class="t" style="left:492.08px;top:445.70px;font-size:15px;line-height:15px;color:#000;transform:scaleX(0.9424);-webkit-text-stroke:0.1px #000;">749,083</span>
<span class="t" style="left:29.78px;top:466.70px;font-size:15px;line-height:15px;color:#000;transform:scaleX(0.9654);-webkit-text-stroke:0.1px #000;">October</span>
<span class="t" style="left:224.72px;top:466.70px;font-size:15px;line-height:15px;color:#000;transform:scaleX(0.9448);-webkit-text-stroke:0.1px #000;">238,394</span>
<span class="t" style="left:314.09px;top:466.70px;font-size:15px;line-height:15px;color:#000;transform:scaleX(0.9400);-webkit-text-stroke:0.1px #000;">183,100</span>
<span class="t" style="left:402.70px;top:466.70px;font-size:15px;line-height:15px;color:#000;transform:scaleX(0.9402);-webkit-text-stroke:0.1px #000;">326,212</span>
<span class="t" style="left:491.96px;top:466.70px;font-size:15px;line-height:15px;color:#000;transform:scaleX(0.9425);-webkit-text-stroke:0.1px #000;">747,706</span>
<span class="t" style="left:29.30px;top:487.70px;font-size:15px;line-height:15px;color:#000;transform:scaleX(0.9593);-webkit-text-stroke:0.1px #000;">November</span>
<span class="t" style="left:225.34px;top:487.70px;font-size:15px;line-height:15px;color:#000;transform:scaleX(0.9354);-webkit-text-stroke:0.1px #000;">158,358</span>
<span class="t" style="left:313.96px;top:487.70px;font-size:15px;line-height:15px;color:#000;transform:scaleX(0.9425);-webkit-text-stroke:0.1px #000;">217,316</span>
<span class="t" style="left:402.34px;top:487.70px;font-size:15px;line-height:15px;color:#000;transform:scaleX(0.9448);-webkit-text-stroke:0.1px #000;">220,940</span>
<span class="t" style="left:491.83px;top:487.70px;font-size:15px;line-height:15px;color:#000;transform:scaleX(0.9426);-webkit-text-stroke:0.1px #000;">596,614</span>
<span class="t" style="left:29.32px;top:508.70px;font-size:15px;line-height:15px;color:#000;transform:scaleX(0.9432);-webkit-text-stroke:0.1px #000;">December</span>
<span class="t" style="left:224.96px;top:508.70px;font-size:15px;line-height:15px;color:#000;transform:scaleX(0.9447);-webkit-text-stroke:0.1px #000;">270,149</span>
<span class="t" style="left:313.96px;top:508.70px;font-size:15px;line-height:15px;color:#000;transform:scaleX(0.9425);-webkit-text-stroke:0.1px #000;">270,266</span>
<span class="t" style="left:402.83px;top:508.70px;font-size:15px;line-height:15px;color:#000;transform:scaleX(0.9356);-webkit-text-stroke:0.1px #000;">213,795</span>
<span class="t" style="left:491.84px;top:508.70px;font-size:15px;line-height:15px;color:#000;transform:scaleX(0.9448);-webkit-text-stroke:0.1px #000;">754,210</span>
<span class="t" style="left:29.59px;top:529.70px;font-size:15px;line-height:15px;color:#000;font-weight:700;transform:scaleX(0.9831);-webkit-text-stroke:0.1px #000;">Grand Total</span>
<span class="t" style="left:225.10px;top:529.70px;font-size:15px;line-height:15px;color:#000;font-weight:700;transform:scaleX(0.9641);-webkit-text-stroke:0.1px #000;">2674096</span>
<span class="t" style="left:313.40px;top:529.70px;font-size:15px;line-height:15px;color:#000;font-weight:700;transform:scaleX(0.9641);-webkit-text-stroke:0.1px #000;">2722129</span>
<span class="t" style="left:403.10px;top:529.70px;font-size:15px;line-height:15px;color:#000;font-weight:700;transform:scaleX(0.9641);-webkit-text-stroke:0.1px #000;">2675496</span>
<span class="t" style="left:491.95px;top:529.70px;font-size:15px;line-height:15px;color:#000;font-weight:700;transform:scaleX(0.9577);-webkit-text-stroke:0.1px #000;">8071721</span>
<span class="t" style="left:9.35px;top:74.00px;font-size:12px;line-height:12px;color:#505050;transform:scaleX(0.9511);">Paste</span>
<span class="t" style="left:8.08px;top:109.00px;font-size:12px;line-height:12px;color:#505050;transform:scaleX(0.9860);">Clipboard</span>
<span class="t" style="left:92.07px;top:47.50px;font-size:12px;line-height:12px;color:#505050;transform:scaleX(1.0084);">Calibri</span>
<span class="t" style="left:202.33px;top:47.50px;font-size:12px;line-height:12px;color:#505050;transform:scaleX(0.9937);">12</span>
<span class="t" style="left:167.37px;top:109.00px;font-size:12px;line-height:12px;color:#505050;transform:scaleX(1.0261);">Font</span>
<span class="t" style="left:446.38px;top:48.00px;font-size:12px;line-height:12px;color:#505050;transform:scaleX(0.9529);">Wrap Text</span>
<span class="t" style="left:445.49px;top:78.80px;font-size:12px;line-height:12px;color:#505050;transform:scaleX(1.0084);">Merge &amp; Center</span>
<span class="t" style="left:388.88px;top:109.00px;font-size:12px;line-height:12px;color:#505050;transform:scaleX(0.9920);">Alignment</span>
<span class="t" style="left:563.06px;top:48.30px;font-size:12px;line-height:12px;color:#505050;transform:scaleX(1.0282);">Custom</span>
<span class="t" style="left:596.53px;top:108.70px;font-size:12px;line-height:12px;color:#505050;transform:scaleX(0.9711);">Number</span>
<span class="t" style="left:704.65px;top:73.70px;font-size:12px;line-height:12px;color:#505050;transform:scaleX(1.0473);">Conditional</span>
<span class="t" style="left:701.47px;top:89.30px;font-size:12px;line-height:12px;color:#505050;transform:scaleX(1.0337);">Formatting</span>
<span class="t" style="left:773.73px;top:73.70px;font-size:12px;line-height:12px;color:#505050;transform:scaleX(0.9710);">Format as</span>
<span class="t" style="left:782.76px;top:89.30px;font-size:12px;line-height:12px;color:#505050;transform:scaleX(0.9686);">Table</span>
<span class="t" style="left:839.88px;top:73.70px;font-size:12px;line-height:12px;color:#505050;">Cell</span>
<span class="t" style="left:830.84px;top:89.30px;font-size:12px;line-height:12px;color:#505050;transform:scaleX(0.9291);">Styles</span>
<span class="t" style="left:770.86px;top:109.00px;font-size:12px;line-height:12px;color:#505050;transform:scaleX(0.8724);">Styles</span>
<span class="t" style="left:902.30px;top:40.00px;font-size:12px;line-height:12px;color:#505050;transform:scaleX(0.9801);">Insert</span>
<span class="t" style="left:902.43px;top:62.90px;font-size:12px;line-height:12px;color:#505050;transform:scaleX(0.9660);">Delete</span>
<span class="t" style="left:902.39px;top:86.20px;font-size:12px;line-height:12px;color:#505050;transform:scaleX(1.0088);">Format</span>
<span class="t" style="left:906.04px;top:109.00px;font-size:12px;line-height:12px;color:#505050;transform:scaleX(0.8898);">Cells</span>
<span class="t" style="left:1003.80px;top:74.00px;font-size:12px;line-height:12px;color:#505050;">Sort &amp;</span>
<span class="t" style="left:1003.27px;top:90.00px;font-size:12px;line-height:12px;color:#505050;transform:scaleX(1.0275);">Filter</span>
<span class="t" style="left:1044.93px;top:74.00px;font-size:12px;line-height:12px;color:#505050;transform:scaleX(1.0657);">Find &amp;</span>
<span class="t" style="left:1043.83px;top:90.00px;font-size:12px;line-height:12px;color:#505050;transform:scaleX(0.9374);">Select</span>
<span class="t" style="left:1006.68px;top:109.00px;font-size:12px;line-height:12px;color:#505050;transform:scaleX(1.0237);">Editing</span>
<span class="t" style="left:10.47px;top:141.00px;font-size:13px;line-height:13px;color:#333;transform:scaleX(0.9287);">E14</span>
<span class="t" style="left:261.09px;top:141.00px;font-size:13px;line-height:13px;color:#222;transform:scaleX(0.9704);">747706</span>
<span class="t" style="left:877.69px;top:185.80px;font-size:21px;line-height:21px;color:#3b8a5c;transform:scaleX(0.9747);">PivotTable Fields</span>
<span class="t" style="left:877.88px;top:225.40px;font-size:12px;line-height:12px;color:#505050;transform:scaleX(0.9969);">Choose fields to add to report:</span>
<span class="t" style="left:879.34px;top:260.10px;font-size:12px;line-height:12px;color:#555;transform:scaleX(0.9170);">Search</span>
<span class="t" style="left:897.95px;top:294.75px;font-size:12.5px;line-height:12.5px;color:#505050;transform:scaleX(0.8757);">CUSTOMER</span>
<span class="t" style="left:897.63px;top:313.75px;font-size:12.5px;line-height:12.5px;color:#505050;transform:scaleX(0.8656);">PRODUCTS</span>
<span class="t" style="left:898.18px;top:332.75px;font-size:12.5px;line-height:12.5px;color:#505050;font-weight:700;transform:scaleX(0.8486);">SALES PERSON</span>
<span class="t" style="left:897.63px;top:351.75px;font-size:12.5px;line-height:12.5px;color:#505050;transform:scaleX(0.8656);">REGION</span>
<span class="t" style="left:897.97px;top:370.75px;font-size:12.5px;line-height:12.5px;color:#505050;transform:scaleX(0.8538);">ORDER DATE</span>
<span class="t" style="left:898.17px;top:389.75px;font-size:12.5px;line-height:12.5px;color:#505050;font-weight:700;transform:scaleX(0.8694);">SALES USD</span>
<span class="t" style="left:898.29px;top:408.75px;font-size:12.5px;line-height:12.5px;color:#505050;font-weight:700;transform:scaleX(0.8293);">YEAR</span>
<span class="t" style="left:897.62px;top:427.75px;font-size:12.5px;line-height:12.5px;color:#505050;font-weight:700;transform:scaleX(1.0085);">MONTH</span>
<span class="t" style="left:897.95px;top:446.75px;font-size:12.5px;line-height:12.5px;color:#505050;transform:scaleX(0.8836);">QTR</span>
<span class="t" style="left:897.95px;top:465.75px;font-size:12.5px;line-height:12.5px;color:#505050;transform:scaleX(0.8846);">CHANNEL PARTNERS</span>
<span class="t" style="left:880.22px;top:502.00px;font-size:12px;line-height:12px;color:#505050;transform:scaleX(0.9779);">Drag fields between areas below:</span>
<span class="t" style="left:902.01px;top:534.70px;font-size:12px;line-height:12px;color:#505050;transform:scaleX(0.9920);">Filters</span>
<span class="t" style="left:1020.86px;top:534.70px;font-size:12px;line-height:12px;color:#505050;transform:scaleX(1.0227);">Columns</span>
<span class="t" style="left:887.48px;top:556.75px;font-size:12.5px;line-height:12.5px;color:#505050;transform:scaleX(0.8295);">SALES PERSON</span>
<span class="t" style="left:1006.19px;top:556.75px;font-size:12.5px;line-height:12.5px;color:#505050;transform:scaleX(0.8242);">YEAR</span>
</body></html>
